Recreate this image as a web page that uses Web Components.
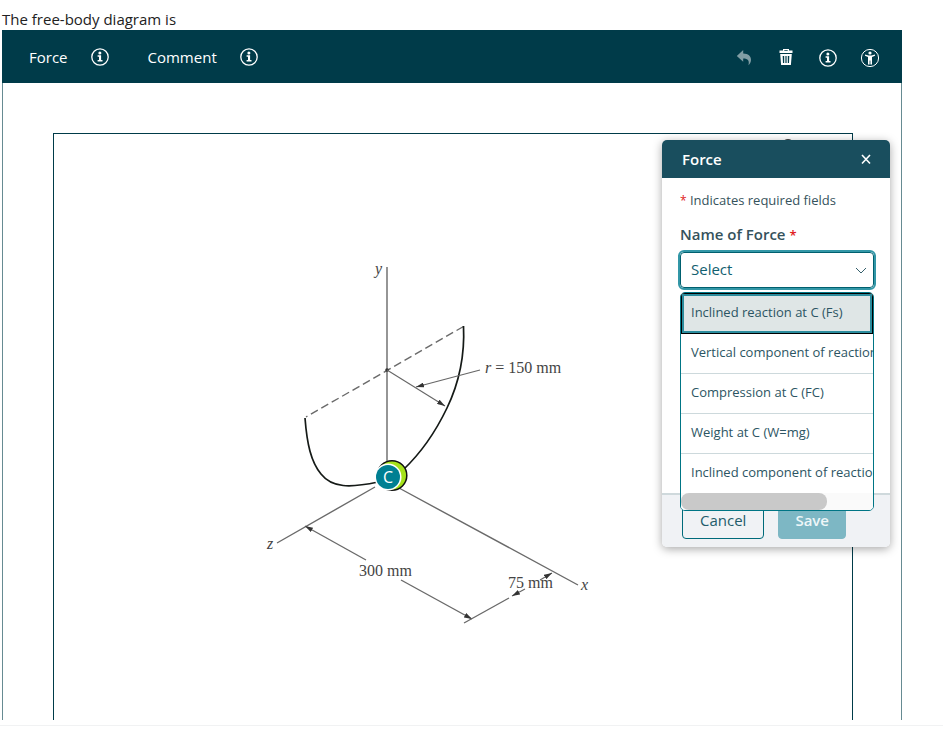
<!DOCTYPE html>
<html lang="en">
<head>
<meta charset="utf-8">
<title>Free-body diagram</title>
<style>
  body {
    margin: 0;
    font-family: "Open Sans", "Noto Sans", sans-serif;
    font-size: 15px;
    color: #222;
    background: #fff;
  }
</style>
</head>
<body>
<question-page>
  <span slot="prompt">The free-body diagram is</span>
  <tool-bar>
    <tool-item label="Force"></tool-item>
    <tool-item label="Comment"></tool-item>
  </tool-bar>
  <diagram-board>
    <force-diagram></force-diagram>
    <force-dialog slot="dialog" title="Force">
      <force-select label="Name of Force">
        <option-item selected>Inclined reaction at C (Fs)</option-item>
        <option-item>Vertical component of reaction</option-item>
        <option-item>Compression at C (FC)</option-item>
        <option-item>Weight at C (W=mg)</option-item>
        <option-item>Inclined component of reaction</option-item>
      </force-select>
    </force-dialog>
  </diagram-board>
</question-page>

<script>
const infoIcon = `
  <svg width="20" height="20" viewBox="0 0 20 20" aria-hidden="true">
    <circle cx="10" cy="10" r="8.2" fill="none" stroke="#fff" stroke-width="1.3"/>
    <circle cx="9.9" cy="6" r="1.5" fill="#fff"/>
    <path d="M7.6 8.3h3.5v4.8h1.4v1.4H7.6v-1.4H9V9.7H7.6z" fill="#fff"/>
  </svg>`;

class BaseElement extends HTMLElement {
  constructor() {
    super();
    this.attachShadow({ mode: "open" });
  }

  connectedCallback() {
    this.render();
  }

  render() {
    const template = document.createElement("template");
    template.innerHTML = `
      <style>
        * { box-sizing: border-box; }
        button, select { font: inherit; color: inherit; }
        button { cursor: pointer; }
        ${this.getStyles()}
      </style>
      ${this.getTemplate()}
    `;
    this.shadowRoot.replaceChildren(template.content.cloneNode(true));
  }
}

class QuestionPage extends BaseElement {
  getStyles() {
    return `
      :host { display: flex; flex-direction: column; box-sizing: border-box; height: 100vh; overflow: hidden; }
      main { flex: 1; min-height: 0; display: flex; flex-direction: column; padding: 0 41px 0 2px; }
      p { margin: 0; padding: 9px 0 1px; line-height: 20px; }
      footer { height: 7px; margin-top: 5px; border-top: 1px solid #f1f2f3; box-sizing: border-box; }
    `;
  }

  getTemplate() {
    return `
      <main>
        <p><slot name="prompt"></slot></p>
        <slot></slot>
      </main>
      <footer></footer>
    `;
  }
}

class ToolBar extends BaseElement {
  getStyles() {
    return `
      :host { display: block; color: #fff; }
      nav { display: flex; align-items: center; justify-content: space-between; height: 53px; background: #003b49; padding: 2px 22px 0 27px; }
      .tools { display: flex; gap: 38px; padding-bottom: 2px; }
      .actions { display: flex; gap: 22px; }
      .actions button { width: 20px; height: 20px; padding: 0; border: 0; background: none; }
      svg { display: block; }
      button:disabled { opacity: .5; }
    `;
  }

  getTemplate() {
    return `
      <nav aria-label="Diagram tools">
        <div class="tools"><slot></slot></div>
        <div class="actions">
          <button disabled aria-label="Undo">
            <svg width="20" height="20" viewBox="0 0 20 20"><path d="M2.8 8 9.2 2v3.6c5 .1 7.8 2.4 7.8 6.4 0 2.2-1.2 4.2-2.6 5.2 1.2-4.2-.2-6.7-5.2-6.7v3.3z" fill="#fff"/></svg>
          </button>
          <button aria-label="Delete">
            <svg width="20" height="20" viewBox="0 0 20 20"><path fill="#fff" fill-rule="evenodd" d="M7 1h6v1.6h3.5v2.4h-13V2.6H7zM8.3 2v.8h3.4V2zM4.2 6h11.6l-.9 11H5.1zM6.7 8l.3 7h1.2V8zM9.4 8v7h1.2V8zM11.8 8v7H13l.3-7z"/></svg>
          </button>
          <button aria-label="Information">${infoIcon}</button>
          <button aria-label="Accessibility">
            <svg width="20" height="20" viewBox="0 0 20 20">
              <circle cx="10" cy="10" r="8.6" fill="none" stroke="#fff"/>
              <circle cx="10" cy="5" r="1.6" fill="#fff"/>
              <path d="M5 6.6 8.5 7.5h3L15 6.6v1.2l-3 1.3v7.4h-1.6v-4h-.8v4H8V9.1L5 7.8z" fill="#fff"/>
            </svg>
          </button>
        </div>
      </nav>
    `;
  }
}

class ToolItem extends BaseElement {
  getStyles() {
    return `
      :host { display: flex; align-items: center; gap: 22px; }
      button { padding: 0; border: 0; background: none; font-size: 15px; line-height: 20px; }
      svg { display: block; }
    `;
  }

  getTemplate() {
    const label = this.getAttribute("label");
    return `
      <button>${label}</button>
      <button aria-label="About ${label}">${infoIcon}</button>
    `;
  }
}

class DiagramBoard extends BaseElement {
  getStyles() {
    return `
      :host { display: flex; flex: 1; min-height: 0; position: relative; box-sizing: border-box; padding: 50px 48px 0 50px; border: solid #668b92; border-width: 0 1px; }
      .canvas { flex: 1; overflow: hidden; border: solid #003b49; border-width: 1px 1px 0; }
      /* the dialog floats over the drawing area */
      ::slotted([slot="dialog"]) { position: absolute; top: 57px; right: 11px; }
    `;
  }

  getTemplate() {
    return `
      <div class="canvas"><slot></slot></div>
      <slot name="dialog"></slot>
    `;
  }
}

class ForceDiagram extends BaseElement {
  getStyles() {
    return `
      :host { display: block; }
      svg { display: block; }
      .axis { stroke: #6a6a6a; stroke-width: 1.4; fill: none; }
      .dim { stroke: #666; stroke-width: 1.1; fill: none; }
      .wire { stroke: #151a17; stroke-width: 1.7; fill: none; }
      text { font-family: "Liberation Serif", serif; font-size: 16px; fill: #444; }
      .var { font-style: italic; }
      .node { font-family: "Open Sans", sans-serif; fill: #fff; }
    `;
  }

  getTemplate() {
    return `
      <svg width="760" height="520" viewBox="54 134 760 520" role="img" aria-label="Wire bent to a radius of 150 mm, held at C">
        <defs>
          <marker id="arrow" viewBox="0 0 8 5" refX="8" refY="2.5" markerWidth="8" markerHeight="5" markerUnits="userSpaceOnUse" orient="auto">
            <path d="M0 0 8 2.5 0 5z" fill="#333"/>
          </marker>
        </defs>
        <path d="M784 142a4 3 0 0 1 8 0z" fill="#444"/>
        <path class="axis" d="M387 267V462M375 487 277 543M399 488 578 585"/>
        <path class="axis" d="M463.5 326.5 306 417" stroke-dasharray="8 4"/>
        <circle cx="387" cy="370" r="1.8" fill="#333"/>
        <path class="wire" d="M463.5 326C465 357 459 383 447 408 435 433 421 453 403 470M305 418C307 444 311 462 321 474 332 488 350 488 378 482"/>
        <path class="dim" marker-end="url(#arrow)" d="M387 370 445 406"/>
        <path class="dim" marker-end="url(#arrow)" d="M480 370 416 387"/>
        <path class="axis" marker-end="url(#arrow)" d="M366 560 305 526"/>
        <path class="axis" marker-end="url(#arrow)" d="M401 580 472 619"/>
        <path class="axis" d="M464 623 509 598"/>
        <path class="dim" marker-end="url(#arrow)" d="M525 589 512 596"/>
        <path class="dim" marker-end="url(#arrow)" d="M540 580 552 573"/>
        <text class="var" x="375" y="274">y</text>
        <text class="var" x="267" y="549">z</text>
        <text class="var" x="581" y="590">x</text>
        <text x="485" y="373"><tspan class="var">r</tspan> = 150 mm</text>
        <text x="359" y="576">300 mm</text>
        <text x="508" y="588">75 mm</text>
        <circle cx="392" cy="475.5" r="14.8" fill="#a5e21a" stroke="#111" stroke-width="1.5"/>
        <circle cx="388" cy="477" r="13.5" fill="#fff"/>
        <circle cx="388" cy="477" r="12" fill="#007f92"/>
        <text class="node" x="388" y="483" text-anchor="middle">C</text>
      </svg>
    `;
  }
}

class ForceDialog extends BaseElement {
  getStyles() {
    return `
      :host { display: block; width: 228px; border-radius: 5px; background: #fff; box-shadow: 0 2px 10px rgba(0, 0, 0, .35); color: #35525c; }
      header { display: flex; align-items: center; justify-content: space-between; height: 38px; padding: 0 18px 0 20px; border-radius: 5px 5px 0 0; background: #194e5e; color: #fff; }
      h2 { margin: 0; font-size: 15px; font-weight: 600; }
      header button { width: 12px; height: 12px; padding: 0; border: 0; background: none; }
      svg { display: block; }
      .body { height: 315px; padding: 12px 16px 0 18px; }
      .note { margin: 0 0 14px; font-size: 13px; line-height: 20px; }
      .star { color: #e02020; font-size: 12px; line-height: 1; }
      footer { display: flex; gap: 14px; padding: 8px 20px; border-top: 2px solid #cfd9dc; border-radius: 0 0 5px 5px; background: #f0f2f5; }
      footer button { height: 36px; border: 1px solid #006a7a; border-radius: 4px; padding: 0 17px 2px; background: none; color: #235c6a; font-size: 15px; }
      footer .save { border-color: #7db7c4; background: #7db7c4; color: #eef6f8; font-weight: 600; padding: 0 16px 2px; }
    `;
  }

  getTemplate() {
    return `
      <header>
        <h2>${this.getAttribute("title")}</h2>
        <button aria-label="Close">
          <svg width="12" height="12" viewBox="0 0 12 12"><path d="M2 2 10 10.5M10 2 2 10.5" stroke="#fff" stroke-width="1.6"/></svg>
        </button>
      </header>
      <div class="body">
        <p class="note"><span class="star">*</span> Indicates required fields</p>
        <slot></slot>
      </div>
      <footer>
        <button>Cancel</button>
        <button class="save">Save</button>
      </footer>
    `;
  }
}

class ForceSelect extends BaseElement {
  getStyles() {
    return `
      :host { display: block; position: relative; }
      label { display: block; margin-bottom: 8px; font-size: 15px; font-weight: 600; line-height: 20px; }
      .star { color: #e02020; font-size: 13px; line-height: 1; }
      .field { position: relative; }
      select { display: block; width: 100%; height: 36px; padding: 0 10px 2px; appearance: none; border: 1px solid #00606f; border-radius: 4px; outline: 2px solid #3397a7; background: #fff; color: #12606f; font-size: 15px; }
      svg { position: absolute; right: 7px; top: 15px; }
      .list { position: absolute; z-index: 1; top: 68px; left: 0; right: 0; overflow: hidden; border: 1px solid #007585; border-radius: 5px; background: #fff; }
      .track { height: 17px; background: #fafafa; }
      .thumb { width: 146px; height: 17px; border-radius: 8px; background: #c9c9c9; }
    `;
  }

  getTemplate() {
    return `
      <label for="name">${this.getAttribute("label")} <span class="star">*</span></label>
      <div class="field">
        <select id="name" required><option>Select</option></select>
        <svg width="12" height="8" viewBox="0 0 12 8" aria-hidden="true"><path d="M1 1 6 6 11 1" fill="none" stroke="#35606c"/></svg>
      </div>
      <div class="list" role="listbox" aria-label="${this.getAttribute("label")}">
        <slot></slot>
        <div class="track"><div class="thumb"></div></div>
      </div>
    `;
  }
}

class OptionItem extends BaseElement {
  getStyles() {
    return `
      :host { display: block; box-sizing: border-box; height: 40px; padding: 0 10px; border-bottom: 1px solid #cdd9dc; font-size: 13px; line-height: 36px; white-space: nowrap; color: #2c5563; }
      :host([selected]) { height: 41px; border: 1px solid #000; padding: 0 9px; background: #dfe6e6; box-shadow: inset 0 0 0 2px #2b8c9d; }
      :host(:last-child) { height: 39px; border-bottom: 0; }
    `;
  }

  getTemplate() {
    return `<slot></slot>`;
  }

  connectedCallback() {
    this.setAttribute("role", "option");
    super.connectedCallback();
  }
}

customElements.define("question-page", QuestionPage);
customElements.define("tool-bar", ToolBar);
customElements.define("tool-item", ToolItem);
customElements.define("diagram-board", DiagramBoard);
customElements.define("force-diagram", ForceDiagram);
customElements.define("force-dialog", ForceDialog);
customElements.define("force-select", ForceSelect);
customElements.define("option-item", OptionItem);
</script>
</body>
</html>
